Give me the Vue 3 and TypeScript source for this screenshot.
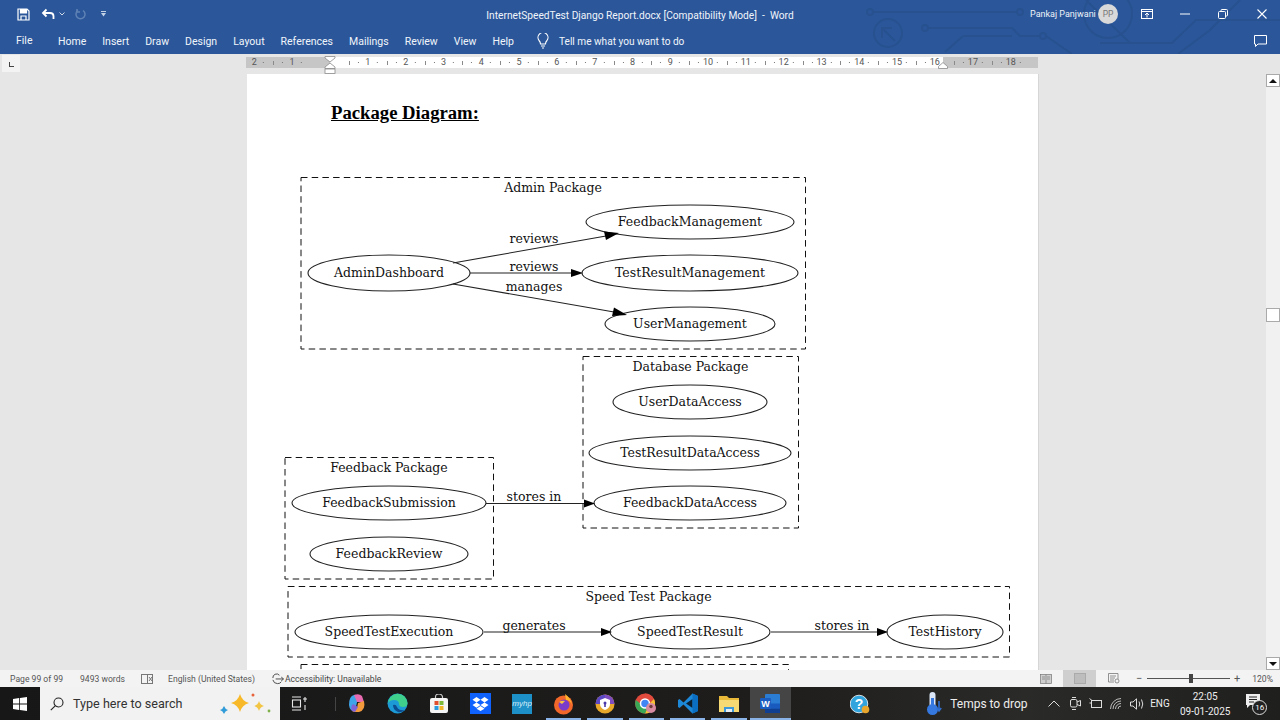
<script setup lang="ts">
const tabs = ['Home', 'Insert', 'Draw', 'Design', 'Layout', 'References', 'Mailings', 'Review', 'View', 'Help']
const rulerLeft = ['2', '1']
const rulerRight = ['1','2','3','4','5','6','7','8','9','10','11','12','13','14','15','16','17','18']

interface Node { x: number; y: number; rx: number; ry: number; t: string }
const nodes: Node[] = [
  { x: 389, y: 273, rx: 81, ry: 18, t: 'AdminDashboard' },
  { x: 690, y: 222, rx: 104, ry: 17, t: 'FeedbackManagement' },
  { x: 690, y: 273, rx: 108, ry: 18, t: 'TestResultManagement' },
  { x: 690, y: 324, rx: 85, ry: 17, t: 'UserManagement' },
  { x: 690, y: 402, rx: 77, ry: 17, t: 'UserDataAccess' },
  { x: 690, y: 453, rx: 101, ry: 17, t: 'TestResultDataAccess' },
  { x: 690, y: 503, rx: 96, ry: 17, t: 'FeedbackDataAccess' },
  { x: 389, y: 503, rx: 97, ry: 17, t: 'FeedbackSubmission' },
  { x: 389, y: 554, rx: 79, ry: 17, t: 'FeedbackReview' },
  { x: 389, y: 632, rx: 94, ry: 17, t: 'SpeedTestExecution' },
  { x: 690, y: 632, rx: 80, ry: 17, t: 'SpeedTestResult' },
  { x: 945, y: 632, rx: 58, ry: 17, t: 'TestHistory' }
]
const boxes = [
  { x: 301, y: 178, w: 504, h: 171, t: 'Admin Package' },
  { x: 583, y: 357, w: 215, h: 171, t: 'Database Package' },
  { x: 285, y: 458, w: 208, h: 121, t: 'Feedback Package' },
  { x: 288, y: 587, w: 721, h: 70, t: 'Speed Test Package' },
  { x: 301, y: 665, w: 487, h: 60, t: '' }
]
const edges = [
  { d: 'M453 263 L606 236', a: '619,233 604,231.5 606,240' },
  { d: 'M470 273 L572 273', a: '583,273 571,269 571,277' },
  { d: 'M453 284 L614 312', a: '627,315 614,307.5 612,316' },
  { d: 'M486 503.5 L584 503.5', a: '595,503.5 584,499.5 584,507.5' },
  { d: 'M484 632 L601 632', a: '612,632 601,628 601,636' },
  { d: 'M771 632 L877 632', a: '888,632 877,628 877,636' }
]
const labels = [
  { x: 534, y: 242.5, t: 'reviews' },
  { x: 534, y: 270.5, t: 'reviews' },
  { x: 534, y: 290.5, t: 'manages' },
  { x: 534, y: 500.5, t: 'stores in' },
  { x: 534, y: 629.5, t: 'generates' },
  { x: 842, y: 629.5, t: 'stores in' }
]
</script>

<template>
  <div class="screen">
    <header class="ribbon">
      <svg class="circuit" width="1280" height="54" viewBox="0 0 1280 54" fill="none" stroke="#27518f" stroke-width="2">
        <path d="M873 12 H1017 M928 28 H1012 L1020 36 H1040 M1046 36 L1072 54 M963 36 H1012 M963 36 L945 52 M1100 43 H1172 L1196 20 H1280 M1240 0 L1210 30 L1178 54 M1086 0 L1130 43" />
        <circle cx="870" cy="12" r="3" /><circle cx="1020" cy="12" r="3" /><circle cx="925" cy="28" r="3" /><circle cx="1043" cy="36" r="3" />
        <circle cx="888" cy="33" r="14" /><circle cx="1108" cy="14" r="24" />
        <path d="M882 38 V28 H892 M882 28 L895 41" />
      </svg>
      <div class="titlebar">
        <div class="qat">
          <svg width="13" height="13" viewBox="0 0 13 13" fill="none" stroke="#fff" stroke-width="1.2">
            <path d="M1 1 H10 L12 3 V12 H1 Z" /><path d="M3.5 1 V5 H9.5 V1" fill="#fff" /><path d="M4 12 V8 H9 V12" />
          </svg>
          <svg class="undo" width="14" height="13" viewBox="0 0 14 13" fill="none" stroke="#fff" stroke-width="1.8">
            <path d="M12.5 11 V8 Q12.5 5 9 5 H2" /><path d="M5.5 1.5 L2 5 L5.5 8.5" />
          </svg>
          <svg width="6" height="4" viewBox="0 0 6 4" fill="none" stroke="#cfd9e8" stroke-width="1"><path d="M.5 .5 L3 3 L5.5 .5" /></svg>
          <svg class="redo" width="11" height="12" viewBox="0 0 11 12" fill="none" stroke="#5f82b5" stroke-width="1.5">
            <path d="M3 2.5 A4.5 4.5 0 1 0 8 2.5" /><path d="M2 1 V4 H5" />
          </svg>
          <svg class="custom" width="5" height="6" viewBox="0 0 5 6" fill="#c4d2e6"><rect y="0" width="5" height="1" /><path d="M0 2 H5 L2.5 5.5 Z" /></svg>
        </div>
        <div class="doc-title">InternetSpeedTest Django Report.docx [Compatibility Mode]&nbsp; -&nbsp; Word</div>
        <div class="win">
          <span class="user">Pankaj Panjwani</span>
          <span class="avatar">PP</span>
          <svg class="w1" width="12" height="10" viewBox="0 0 12 10" fill="none" stroke="#fff"><rect x=".5" y=".5" width="11" height="9" /><path d="M.5 2.5 H11.5" /><path d="M6 8.5 V4 M4 6 L6 4 L8 6" /></svg>
          <svg class="w2" width="10" height="2" viewBox="0 0 10 2" fill="none" stroke="#fff"><path d="M0 1 H10" /></svg>
          <svg class="w3" width="10" height="10" viewBox="0 0 10 10" fill="none" stroke="#fff"><rect x=".5" y="2.5" width="7" height="7" rx="1" /><path d="M3 2.5 V1.5 Q3 .5 4 .5 H8.5 Q9.5 .5 9.5 1.5 V6 Q9.5 7 8.5 7 H7.5" /></svg>
          <svg class="w4" width="10" height="10" viewBox="0 0 10 10" fill="none" stroke="#fff" stroke-width="1.1"><path d="M.5 .5 L9.5 9.5 M9.5 .5 L.5 9.5" /></svg>
        </div>
      </div>
      <div class="tabbar">
        <span class="file">File</span>
        <nav class="tabs">
          <span v-for="t in tabs" :key="t">{{ t }}</span>
        </nav>
        <svg class="bulb" width="12" height="16" viewBox="0 0 12 16" fill="none" stroke="#fff" stroke-width="1.1">
          <path d="M3.5 11 Q3.5 9 2 7.5 A5 5 0 1 1 10 7.5 Q8.5 9 8.5 11 Z" /><path d="M4 13 H8 M5 15 H7" />
        </svg>
        <span class="tell">Tell me what you want to do</span>
        <svg class="comment" width="13" height="13" viewBox="0 0 13 13" fill="none" stroke="#fff"><path d="M.5 .5 H12.5 V9 H4 L1.5 11.5 V9 H.5 Z" /></svg>
      </div>
    </header>

    <div class="ruler-row">
      <div class="tab-stop"><span></span></div>
      <div class="ruler">
        <div class="margin left">
          <span v-for="n in rulerLeft" :key="n" class="num">{{ n }}</span>
        </div>
        <div class="body">
          <span v-for="n in rulerRight.slice(0, 16)" :key="n" class="num">{{ n }}</span>
        </div>
        <div class="margin right">
          <span v-for="n in rulerRight.slice(16)" :key="n" class="num">{{ n }}</span>
        </div>
        <svg class="indent" width="12" height="18" viewBox="0 0 12 18" fill="#fff" stroke="#8a8a8a" stroke-width=".8">
          <path d="M1 .5 H11 V2 L6 6 L1 2 Z" /><path d="M6 7 L11 11 V12.5 H1 V11 Z" /><rect x="1" y="13" width="10" height="4.5" />
        </svg>
        <svg class="indent-r" width="10" height="7" viewBox="0 0 10 7" fill="#fff" stroke="#8a8a8a" stroke-width=".8"><path d="M5 .5 L9.5 4.5 V6.5 H.5 V4.5 Z" /></svg>
      </div>
    </div>

    <main class="workspace">
      <article class="page">
        <h1>Package Diagram:</h1>
        <svg class="diagram" width="791" height="497" viewBox="247 173 791 497">
          <rect v-for="b in boxes" :key="b.x + '-' + b.y" :x="b.x" :y="b.y - .5" :width="b.w + .5" :height="b.h + .5"
                fill="none" stroke="#111" stroke-width="1" stroke-dasharray="6.5 4.2" />
          <text v-for="b in boxes" :key="b.t" class="lbl" :x="b.x + b.w / 2" :y="b.y + 13.5">{{ b.t }}</text>
          <ellipse v-for="n in nodes" :key="n.t" :cx="n.x" :cy="n.y" :rx="n.rx" :ry="n.ry" fill="#fff" stroke="#222" stroke-width="1.1" />
          <text v-for="n in nodes" :key="n.t + 't'" class="lbl" :x="n.x" :y="n.y + 4.4">{{ n.t }}</text>
          <g v-for="e in edges" :key="e.d">
            <path :d="e.d" fill="none" stroke="#222" stroke-width="1.1" />
            <polygon :points="e.a" fill="#000" />
          </g>
          <text v-for="l in labels" :key="l.x + '-' + l.y" class="lbl" :x="l.x" :y="l.y">{{ l.t }}</text>
        </svg>
      </article>
      <aside class="scrollbar">
        <div class="sb-btn"><i class="up"></i></div>
        <div class="sb-track"><div class="sb-thumb"></div></div>
        <div class="sb-btn"><i class="down"></i></div>
      </aside>
    </main>

    <footer class="status">
      <span class="s1">Page 99 of 99</span>
      <span class="s2">9493 words</span>
      <svg class="s3" width="12" height="10" viewBox="0 0 12 10" fill="none" stroke="#777"><rect x=".5" y=".5" width="11" height="9" /><path d="M6.5 .5 V9.5 M8 3 L11 7 M11 3 L8 7" /></svg>
      <span class="s4">English (United States)</span>
      <svg class="s5" width="14" height="13" viewBox="0 0 15 13" fill="none" stroke="#444" stroke-width="1"><path d="M2 6 A4 4 0 0 1 9 3 M13 7 H5 M2 8 Q3 12 7 12 Q10 12 11 10" /><path d="M11 5 L13.5 7 L11 9" /></svg>
      <span class="s6">Accessibility: Unavailable</span>
      <div class="status-right">
        <svg width="12" height="10" viewBox="0 0 12 10" fill="#cfcfcf" stroke="#777" stroke-width=".7"><rect x=".5" y=".5" width="11" height="9" /><path d="M6 .5 V9.5 M2 3 H5 M2 5 H5 M7 3 H10 M7 5 H10" /></svg>
        <span class="view-on"><i></i></span>
        <svg width="12" height="11" viewBox="0 0 12 11" fill="none" stroke="#777" stroke-width=".8"><path d="M.5 .5 H10 V6 M.5 .5 V9 H6 M2 3 H8 M2 5 H7 M2 7 H6" /><circle cx="9" cy="8" r="2" /></svg>
        <div class="zoom">
          <span class="pm">−</span>
          <div class="slider"><i></i></div>
          <span class="pm">+</span>
          <span class="pct">120%</span>
        </div>
      </div>
    </footer>

    <footer class="taskbar">
      <div class="start">
        <svg width="14" height="14" viewBox="0 0 14 14" fill="#fff"><path d="M0 2 L6.2 1 V6.6 H0 Z M7 .9 L14 0 V6.6 H7 Z M0 7.4 H6.2 V13 L0 12 Z M7 7.4 H14 V14 L7 13.1 Z" /></svg>
      </div>
      <div class="search">
        <svg width="14" height="14" viewBox="0 0 14 14" fill="none" stroke="#222" stroke-width="1.1"><circle cx="8.5" cy="5.5" r="4.5" /><path d="M5.2 8.8 L.8 13.2" /></svg>
        <span>Type here to search</span>
        <svg class="sparkle" width="54" height="26" viewBox="0 0 54 26">
          <path d="M21 1 Q23 8 30 10 Q23 12 21 19 Q19 12 12 10 Q19 8 21 1 Z" fill="#f7b92a" />
          <path d="M40 8 Q41 12 45 13 Q41 14 40 18 Q39 14 35 13 Q39 12 40 8 Z" fill="#f2c544" />
          <path d="M5 13 Q6 16 9 17 Q6 18 5 21 Q4 18 1 17 Q4 16 5 13 Z" fill="#2f9bd8" />
          <circle cx="34" cy="2" r="1.5" fill="#e8633c" /><circle cx="50" cy="18" r="1.4" fill="#7fb04a" />
        </svg>
      </div>
      <div class="apps">
        <div class="app">
          <svg width="17" height="15" viewBox="0 0 17 15" fill="none" stroke="#e8e8e8" stroke-width="1.1"><path d="M1 1 H10 M1 14 H10" /><rect x="1.5" y="4" width="8" height="7" /><path d="M14 1 V6 M14 9 V14 M12 3 H16" /></svg>
        </div>
        <div class="sep"></div>
        <div class="app">
          <svg width="21" height="21" viewBox="0 0 21 21">
            <path d="M3 12 Q3 3 8 2 Q11 1 12 5 L9 18 Q4 19 3 12 Z" fill="#3fa4e8" />
            <path d="M8 2 Q13 0 16 3 L18 9 L11 9 Z" fill="#e66bb0" />
            <path d="M18 8 Q20 17 13 19 L6 19 Q11 18 12 10 Z" fill="#f39a3c" />
            <path d="M6 18 Q4 14 7 11 L12 14 L9 19 Z" fill="#7f64d6" />
          </svg>
        </div>
        <div class="app">
          <svg width="21" height="21" viewBox="0 0 21 21">
            <circle cx="10.5" cy="10.5" r="10" fill="#1c9ad6" />
            <path d="M1 11 A9.7 9.7 0 0 1 20.5 10 Q20.5 14 16 14 Q12 14 12 11 Q12 7 7 7 Q2 7 1 11 Z" fill="#3fd08c" />
            <path d="M6 12 Q6 17 11 19 Q14 20 18 17 Q12 18 10 14 Q9 11 6 12 Z" fill="#0c4d8f" />
          </svg>
        </div>
        <div class="app">
          <svg width="18" height="19" viewBox="0 0 18 19">
            <path d="M5.5 5 V3 A3.5 3 0 0 1 12.5 3 V5" fill="none" stroke="#ccc" stroke-width="1.2" />
            <rect y="4" width="18" height="15" rx="2" fill="#f5f5f5" />
            <rect x="4.5" y="7" width="4" height="4" fill="#e0502f" /><rect x="9.5" y="7" width="4" height="4" fill="#7fb93a" />
            <rect x="4.5" y="12" width="4" height="4" fill="#2a9adf" /><rect x="9.5" y="12" width="4" height="4" fill="#f3b52a" />
          </svg>
        </div>
        <div class="app">
          <svg width="21" height="21" viewBox="0 0 21 21">
            <rect width="21" height="21" fill="#0f62fe" />
            <path d="M6.5 4 L10.5 6.7 L6.5 9.4 L2.5 6.7 Z M14.5 4 L18.5 6.7 L14.5 9.4 L10.5 6.7 Z M6.5 9.4 L10.5 12.1 L6.5 14.8 L2.5 12.1 Z M14.5 9.4 L18.5 12.1 L14.5 14.8 L10.5 12.1 Z M6.5 15.7 L10.5 13 L14.5 15.7 L10.5 18 Z" fill="#fff" />
          </svg>
        </div>
        <div class="app"><span class="myhp">myhp</span></div>
        <div class="app">
          <svg width="21" height="22" viewBox="0 0 21 22">
            <circle cx="10.5" cy="12" r="9.5" fill="#f2682a" />
            <path d="M12 1 Q18 5 19 12 Q17 7 13 7 Z" fill="#ffb22e" />
            <circle cx="11" cy="12" r="5.5" fill="#7a3cc8" />
            <path d="M6 9 Q9 7 12 8 L9 11 Z" fill="#f8c23c" />
          </svg>
        </div>
        <div class="app">
          <svg width="20" height="20" viewBox="0 0 20 20">
            <circle cx="10" cy="10" r="9.5" fill="#e8a92a" />
            <path d="M10 .5 A9.5 9.5 0 0 1 19.5 10 L10 10 Z" fill="#7d4cc0" />
            <path d="M.5 10 A9.5 9.5 0 0 1 10 .5 L10 10 Z" fill="#5d48c4" />
            <path d="M10 4 L15 6 V10 Q15 14 10 16 Q5 14 5 10 V6 Z" fill="#fff" />
            <circle cx="10" cy="9" r="1.5" fill="#4b3aa8" /><rect x="9.2" y="9" width="1.6" height="4" fill="#4b3aa8" />
          </svg>
        </div>
        <div class="app">
          <svg width="22" height="21" viewBox="0 0 22 21">
            <circle cx="10" cy="10.5" r="10" fill="#df4a3c" />
            <path d="M10 .5 A10 10 0 0 1 19 6 H10 Z" fill="#e04b3e" />
            <path d="M19 6 A10 10 0 0 1 10 20.5 L14 11 Z" fill="#f6c333" />
            <path d="M.8 7 A10 10 0 0 0 10 20.5 L13 14 L6 11 Z" fill="#3aa757" />
            <circle cx="10" cy="10.5" r="4.5" fill="#4285f4" stroke="#fff" stroke-width="1.5" />
            <circle cx="16" cy="15" r="5" fill="#d88aa0" />
            <circle cx="16" cy="13.5" r="1.7" fill="#6d3d3a" />
          </svg>
        </div>
        <div class="app">
          <svg width="20" height="21" viewBox="0 0 20 21">
            <path d="M14.5 .5 L20 3 V18 L14.5 20.5 L5.5 11.5 L1.5 15 L0 14 V7 L1.5 6 L5.5 9.5 Z" fill="#1e88d8" />
            <path d="M14.5 6 L8 10.5 L14.5 15 Z" fill="#0b1f30" />
            <path d="M14.5 .5 L20 3 V18 L14.5 20.5 Z" fill="#0a6fc2" />
          </svg>
        </div>
        <div class="app">
          <svg width="20" height="17" viewBox="0 0 20 17">
            <path d="M0 1 H8 L10 3 H20 V16 H0 Z" fill="#e9b93a" />
            <rect y="5" width="20" height="12" fill="#f7da74" />
            <rect x="5" y="12" width="10" height="5" fill="#3f98d8" /><rect x="7" y="14" width="6" height="3" fill="#e7eef5" />
          </svg>
        </div>
        <div class="app active">
          <svg width="20" height="19" viewBox="0 0 20 19">
            <rect x="5" y="0" width="15" height="19" rx="1" fill="#2b7cd3" />
            <rect x="5" y="9.5" width="15" height="5" fill="#185abd" /><rect x="5" y="14.5" width="15" height="4.5" fill="#103f91" />
            <rect y="4" width="11" height="11" rx="1" fill="#1a5cbf" />
            <text x="5.5" y="12.5" class="w-letter">W</text>
          </svg>
        </div>
      </div>
      <div class="tray">
        <svg class="help" width="20" height="20" viewBox="0 0 20 20">
          <circle cx="9" cy="10" r="8.8" fill="#31a4dd" stroke="#fff" stroke-width=".8" />
          <text x="9" y="15" class="q">?</text>
          <circle cx="15.5" cy="15.5" r="3.8" fill="#e8a62c" />
        </svg>
        <svg class="thermo" width="16" height="25" viewBox="0 0 16 25">
          <rect x="3.5" y="1" width="6" height="16" rx="3" fill="#dbe6f7" />
          <circle cx="6.5" cy="18.5" r="5.5" fill="#3478e0" /><rect x="5" y="7" width="3" height="10" fill="#3478e0" />
          <path d="M13 10 V19 M10.8 17 L13 20 L15.2 17" stroke="#2f6fd0" stroke-width="1.6" fill="none" />
        </svg>
        <span class="temps">Temps to drop</span>
        <svg class="chev" width="12" height="7" viewBox="0 0 12 7" fill="none" stroke="#ddd"><path d="M.5 6.5 L6 1 L11.5 6.5" /></svg>
        <svg class="ti meet" width="11" height="13" viewBox="0 0 11 13" fill="none" stroke="#ddd"><rect x=".5" y="2.5" width="6.5" height="7.5" rx="1.5" /><path d="M7 5 L10.5 3.5 V9 L7 7.5 M2 .5 H6 M2 12.5 H6" /></svg>
        <svg class="ti" width="13" height="11" viewBox="0 0 13 11" fill="none" stroke="#ddd"><rect x="2.5" y="2.5" width="10" height="7" /><path d="M.5 .5 L3 2.5 M2.5 5 H.5" /></svg>
        <svg class="ti" width="12" height="12" viewBox="0 0 12 12" fill="none" stroke="#bbb"><path d="M.5 11 A10.5 10.5 0 0 1 11 .5 M3 11 A8 8 0 0 1 11 3 M5.5 11 A5.5 5.5 0 0 1 11 5.5 M8 11 A3 3 0 0 1 11 8" /></svg>
        <svg class="ti" width="14" height="12" viewBox="0 0 14 12" fill="none" stroke="#ddd"><path d="M.5 4 H3 L6.5 .8 V11.2 L3 8 H.5 Z M9 3.5 Q10.5 6 9 8.5 M11.5 1.5 Q14 6 11.5 10.5" /></svg>
        <span class="eng">ENG</span>
        <div class="clock"><span>22:05</span><span>09-01-2025</span></div>
        <div class="notif">
          <svg width="16" height="14" viewBox="0 0 16 14" fill="#eee"><path d="M0 0 H14 V11 H4 L1 14 V11 H0 Z" /><path d="M3 3 H11 M3 5.5 H11 M3 8 H8" stroke="#222" stroke-width="1" /></svg>
          <span class="badge">16</span>
        </div>
      </div>
    </footer>
  </div>
</template>

<style>
html, body { margin: 0; padding: 0; overflow: hidden; }
</style>

<style scoped>
.screen {
  width: 1280px; height: 720px; display: flex; flex-direction: column; overflow: hidden;
  font-family: Roboto, "Open Sans", sans-serif; background: #e6e6e6; color: #444;
}
.ribbon { position: relative; height: 54px; background: #2b579a; color: #fff; flex: none; }
.circuit { position: absolute; left: 0; top: 0; }
.titlebar { position: relative; height: 28px; display: flex; align-items: center; }
.qat { display: flex; align-items: center; width: 340px; padding-left: 17px; box-sizing: border-box; flex: none; }
.undo { margin-left: 11px; }
.qat > svg:nth-child(3) { margin-left: 4px; }
.redo { margin-left: 10px; }
.custom { margin-left: 15px; }
.doc-title { width: 600px; flex: none; font-size: 10.2px; text-align: center; color: #f0f4fa; white-space: nowrap; padding-top: 2px; }
.win { position: relative; flex: 1; display: flex; align-items: center; font-size: 9px; }
.user { margin-left: 90px; width: 60px; flex: none; color: #eef2f8; white-space: nowrap; }
.avatar { width: 20px; height: 20px; flex: none; border-radius: 50%; background: #d9d9d9; color: #777; display: flex; align-items: center; justify-content: center; margin-left: 8px; font-size: 8.5px; }
.w1 { margin-left: 23px; flex: none; }
.w2 { margin-left: 27px; flex: none; }
.w3 { margin-left: 28px; flex: none; }
.w4 { margin-left: 29px; flex: none; }
.tabbar { position: relative; height: 26px; display: flex; align-items: center; font-size: 10.5px; color: #f1f5fa; }
.file { margin-left: 16px; width: 42px; margin-top: -1px; flex: none; }
.tabs { display: flex; gap: 16px; width: 479px; flex: none; }
.tell { margin-left: 10px; font-size: 10.1px; }
.comment { margin-left: auto; margin-right: 13px; }

.ruler-row { position: relative; height: 20px; display: flex; background: #e6e6e6; flex: none; }
.tab-stop { width: 18px; height: 17px; margin-left: 2px; margin-top: 1px; background: #f3f3f3; display: flex; align-items: center; justify-content: center; }
.tab-stop span { width: 4px; height: 4px; border-left: 1.5px solid #444; border-bottom: 1.5px solid #444; margin-top: 2px; }
.ruler { position: relative; margin-left: 226px; margin-top: 3px; height: 11px; width: 792px; display: flex; background: #fff; font-size: 9px; color: #555; line-height: 11px; }
.margin { background: #c6c6c6; display: flex; height: 11px; overflow: hidden; }
.margin.left { width: 84px; justify-content: flex-end; }
.margin.left .num { position: relative; left: -19px; }
.body { width: 613px; display: flex; padding-left: 19px; box-sizing: border-box; overflow: hidden; }
.num {
  width: 37.8px; flex: none; text-align: center;
  background:
    linear-gradient(#8a8a8a, #8a8a8a) 0 center / 1px 4px no-repeat,
    radial-gradient(circle, #777 .6px, transparent .8px) 0 0 / 18.9px 11px;
}
.margin.right { flex: 1; padding-left: 11px; }
.indent { position: absolute; left: 78px; top: -1px; }
.indent-r { position: absolute; left: 692px; top: 5px; }

.workspace { flex: 1; display: flex; min-height: 0; overflow: hidden; }
.page { width: 791px; margin-left: 247px; background: #fff; display: flex; flex-direction: column; box-shadow: 1px 0 0 #d6d6d6; overflow: hidden; }
h1 { margin: 28px 0 0 84px; font: bold 18.7px/22px "Liberation Serif", serif; color: #000; text-decoration: underline; height: 71px; flex: none; }
.diagram { display: block; flex: none; }
.lbl { font: 12.5px "DejaVu Serif", serif; fill: #111; text-anchor: middle; }
.scrollbar { width: 14px; margin-left: auto; margin-right: 0; background: #f1f1f1; display: flex; flex-direction: column; }
.sb-btn { height: 13px; background: #fff; border: 1px solid #a9a9a9; box-sizing: border-box; display: flex; align-items: center; justify-content: center; }
.sb-btn i { width: 0; height: 0; border-left: 4px solid transparent; border-right: 4px solid transparent; }
.up { border-bottom: 4px solid #111; }
.down { border-top: 4px solid #111; }
.sb-track { flex: 1; padding-top: 221px; }
.sb-thumb { height: 14px; background: #fff; border: 1px solid #aaa; box-sizing: border-box; }

.status { height: 17px; background: #f3f3f3; flex: none; display: flex; align-items: center; font-size: 8.6px; color: #555; position: relative; }
.s1 { margin-left: 10px; width: 70px; flex: none; }
.s2 { width: 61px; flex: none; }
.s3 { flex: none; }
.s4 { margin-left: 15px; width: 103px; flex: none; white-space: nowrap; }
.s5 { flex: none; }
.s6 { margin-left: 0; color: #444; white-space: nowrap; }
.status-right { margin-left: auto; display: flex; align-items: center; height: 17px; margin-right: 7px; }
.view-on { width: 33px; height: 17px; background: #cfcfcf; margin-left: 11px; margin-right: 12px; display: flex; align-items: center; justify-content: center; }
.view-on i { width: 12px; height: 11px; background: #bdbdbd; border: 1px solid #aaa; box-sizing: border-box; }
.zoom { display: flex; align-items: center; margin-left: 14px; }
.pm { font-size: 11px; width: 10px; text-align: center; color: #555; }
.slider { width: 83px; height: 1px; background: #555; position: relative; margin: 0 2px 0 3px; }
.slider i { position: absolute; left: 42px; top: -4px; width: 4px; height: 9px; background: #444; }
.pct { margin-left: 10px; }

.taskbar { height: 33px; flex: none; background: linear-gradient(90deg, #171717, #1e1d1c 60%, #2a2a28 80%, #1f1f1e); display: flex; align-items: center; color: #eee; }
.start { width: 40px; display: flex; justify-content: center; }
.search { width: 240px; height: 33px; background: #f2f2f2; color: #333; display: flex; align-items: center; font-size: 12.6px; box-sizing: border-box; padding-left: 10px; position: relative; }
.search span { margin-left: 9px; white-space: nowrap; }
.sparkle { position: absolute; left: 179px; top: 6px; }
.apps { display: flex; align-items: center; height: 33px; }
.app { width: 41.4px; height: 33px; display: flex; align-items: center; justify-content: center; flex: none; position: relative; }
.app:first-child { margin-left: -1px; }
.sep { width: 1px; height: 14px; background: #444; margin: 0 -0.5px 0 15px; flex: none; }
.app.active { background: #454545; }
.app:nth-child(n+8)::after { content: ""; position: absolute; left: 3px; right: 3px; bottom: 0; height: 2px; background: #8ab4e8; }
.app.active::after { left: 0; right: 0; }
.myhp { width: 20px; height: 20px; background: #1e90c8; color: #d8eef8; font: italic 8px "Liberation Sans", sans-serif; display: flex; align-items: center; justify-content: center; }
.w-letter { font: bold 9px "Liberation Sans", sans-serif; fill: #fff; text-anchor: middle; }
.tray { flex: 1; display: flex; align-items: center; height: 33px; position: relative; min-width: 0; }
.help { margin-left: 59px; flex: none; }
.q { font: bold 14px "Liberation Sans", sans-serif; fill: #fff; text-anchor: middle; }
.thermo { margin-left: 56px; flex: none; }
.temps { margin-left: 8px; font-size: 12px; color: #eee; width: 98px; flex: none; white-space: nowrap; }
.chev { flex: none; }
.ti { margin-left: 8px; flex: none; }
.meet { margin-left: 10px; }
.eng { margin-left: 6px; font-size: 10px; width: 24px; flex: none; }
.clock { margin-left: 4px; display: flex; flex-direction: column; align-items: center; font-size: 10px; line-height: 15px; width: 54px; flex: none; white-space: nowrap; }
.notif { position: relative; margin-left: 14px; width: 20px; height: 26px; flex: none; }
.notif svg { position: absolute; left: 0; top: 3px; }
.badge { position: absolute; left: 6px; top: 9px; width: 13px; height: 13px; border-radius: 50%; background: #222; border: 1px solid #ddd; font-size: 8px; display: flex; align-items: center; justify-content: center; color: #fff; }
</style>
